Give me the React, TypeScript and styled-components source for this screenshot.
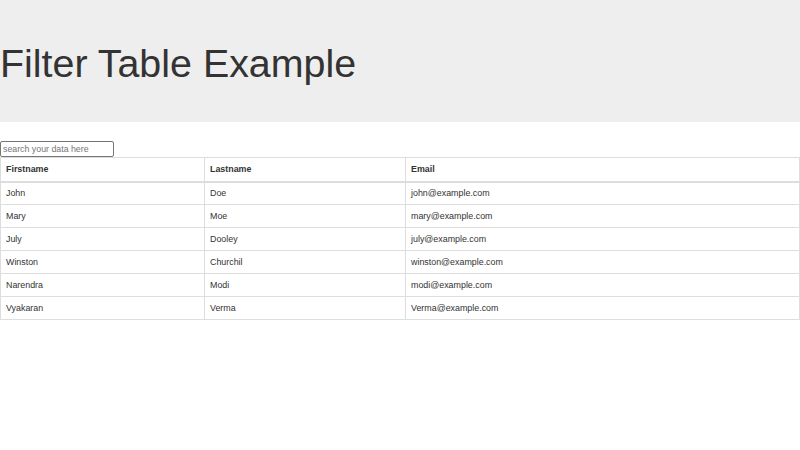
import React, { useState } from "react";
import styled, { createGlobalStyle } from "styled-components";

const Global = createGlobalStyle`
  html, body { margin: 0; padding: 0; background: #fff; }
  body { font-family: "Liberation Sans", Arial, sans-serif; color: #333; }
  * { box-sizing: border-box; }
`;

const Jumbotron = styled.div`
  background: #eeeeee;
  height: 122px;
  display: flex;
  align-items: center;
`;

const Title = styled.h1`
  margin: 0;
  padding-top: 6px;
  font-size: 39.4px;
  font-weight: 400;
  line-height: 1.1;
  color: #333;
`;

const Search = styled.input`
  display: block;
  margin-top: 19px;
  width: 114px;
  height: 16px;
  padding: 0 2px;
  border: 1px solid #767676;
  border-radius: 2px;
  font-family: "Liberation Sans", Arial, sans-serif;
  font-size: 8.8px;
  color: #333;
  &::placeholder { color: #757575; }
`;

const Table = styled.table`
  width: 100%;
  border-collapse: collapse;
  font-size: 8.9px;
  color: #333;
`;

const Th = styled.th<{ $w?: string }>`
  text-align: left;
  font-weight: 700;
  padding: 0 5px;
  height: 24px;
  border: 1px solid #ddd;
  border-bottom: 2px solid #ddd;
  width: ${(p) => p.$w || "auto"};
`;

const Td = styled.td`
  padding: 0 5px;
  height: 23px;
  border: 1px solid #ddd;
`;

const rows = [
  ["John", "Doe", "john@example.com"],
  ["Mary", "Moe", "mary@example.com"],
  ["July", "Dooley", "july@example.com"],
  ["Winston", "Churchil", "winston@example.com"],
  ["Narendra", "Modi", "modi@example.com"],
  ["Vyakaran", "Verma", "Verma@example.com"],
];

export default function App() {
  const [q, setQ] = useState("");
  const filtered = rows.filter((r) =>
    r.join(" ").toLowerCase().includes(q.toLowerCase())
  );
  return (
    <>
      <Global />
      <Jumbotron>
        <Title>Filter Table Example</Title>
      </Jumbotron>
      <Search
        placeholder="search your data here"
        value={q}
        onChange={(e) => setQ(e.target.value)}
      />
      <Table>
        <thead>
          <tr>
            <Th $w="204px">Firstname</Th>
            <Th $w="201px">Lastname</Th>
            <Th>Email</Th>
          </tr>
        </thead>
        <tbody>
          {filtered.map((r) => (
            <tr key={r[2]}>
              {r.map((c) => (
                <Td key={c}>{c}</Td>
              ))}
            </tr>
          ))}
        </tbody>
      </Table>
    </>
  );
}
